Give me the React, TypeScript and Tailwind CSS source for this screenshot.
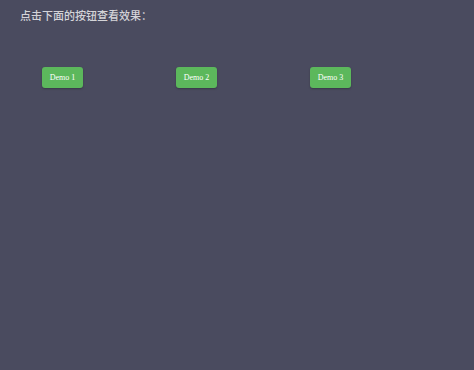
export default function App() {
  return (
    <div
      className="w-[474px] h-[370px] bg-[#4a4b5f] overflow-hidden"
      style={{ fontFamily: '"Liberation Serif", "Noto Sans CJK SC", serif' }}
    >
      <p className="pt-[9px] pl-[20px] text-[11px] leading-[14px] text-[#d4d4d8] font-medium">
        点击下面的按钮查看效果：
      </p>
      <div className="flex pl-[42px] pt-[44px] gap-[93px]">
        {["Demo 1", "Demo 2", "Demo 3"].map((t) => (
          <button
            key={t}
            className="w-[41px] h-[21px] rounded-[3px] bg-[#5cb85c] text-white text-[8px] shadow-[0_1px_2px_rgba(0,0,0,0.25)]"
          >
            {t}
          </button>
        ))}
      </div>
    </div>
  );
}
